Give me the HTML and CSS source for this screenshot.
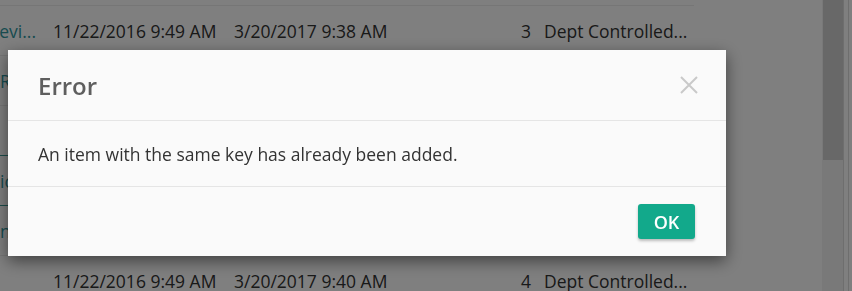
FILE: index.html
```html
<!DOCTYPE html>
<html lang="en">
<head>
    <meta charset="UTF-8">
    <meta name="viewport" content="width=device-width, initial-scale=1.0">
    <title>Documents</title>
    <link rel="stylesheet" href="styles.css">
</head>
<body>
    <div class="page">
        <div class="grid">
            <div class="row">
                <div class="cell name"><a href="#">Revi...</a></div>
                <div class="cell">11/22/2016 9:49 AM</div>
                <div class="cell">3/20/2017 9:38 AM</div>
                <div class="cell count">3</div>
                <div class="cell type">Dept Controlled...</div>
            </div>
            <div class="row">
                <div class="cell name start"><a href="#">Re</a></div>
            </div>
            <div class="row before-selected"></div>
            <div class="row selected">
                <div class="cell name"><a href="#">ic</a></div>
            </div>
            <div class="row">
                <div class="cell name"><a href="#">n</a></div>
            </div>
            <div class="row last">
                <div class="cell name"></div>
                <div class="cell">11/22/2016 9:49 AM</div>
                <div class="cell">3/20/2017 9:40 AM</div>
                <div class="cell count">4</div>
                <div class="cell type">Dept Controlled...</div>
            </div>
        </div>
        <div class="scrollbar">
            <div class="thumb"></div>
        </div>
        <div class="edge"></div>
    </div>

    <!-- Error dialog -->
    <div class="backdrop"></div>
    <div class="dialog">
        <div class="dialog-header">
            <h4 class="dialog-title">Error</h4>
            <button class="close" aria-label="Close">
                <svg width="18" height="18" viewBox="0 0 18 18">
                    <path d="M1 1 L17 17 M17 1 L1 17" stroke="#c9c9c9" stroke-width="2" fill="none"/>
                </svg>
            </button>
        </div>
        <div class="dialog-body">An item with the same key has already been added.</div>
        <div class="dialog-footer">
            <button class="btn-ok">OK</button>
        </div>
    </div>
</body>
</html>
```

FILE: styles.css
```css
html, body {
    margin: 0;
    height: 291px;
    overflow: hidden;
}
body {
    font-family: "Open Sans", "Noto Sans", sans-serif;
    font-size: 17.5px;
    color: #333;
    background: #fff;
}
.page {
    display: flex;
    height: 291px;
}
.grid {
    width: 822px;
    height: 286px;
    padding-top: 5px;
    overflow: hidden;
}
.row {
    width: 694px;
    height: 49px;
    display: grid;
    grid-template-columns: 45px 181px 184px 129px 155px;
    align-items: center;
    border-bottom: 1px solid #ececec;
    white-space: nowrap;
}
.row:first-child {
    border-top: 1px solid #ececec;
}
.before-selected,
.selected {
    border-bottom-color: #3a9a96;
}
.cell {
    padding: 0 8px;
    overflow: hidden;
}
.name {
    display: flex;
    justify-content: flex-end;
    padding: 0 9px 0 0;
}
.name.start {
    justify-content: flex-start;
    padding: 0;
}
.selected .name,
.row:nth-child(5) .name {
    justify-content: flex-start;
    padding: 0;
}
.name a {
    color: #30979f;
    text-decoration: none;
}
.count {
    text-align: right;
}
.type {
    padding-left: 5px;
}
.scrollbar {
    width: 20px;
    background: #f3f3f3;
    padding-left: 1px;
}
.thumb {
    height: 160px;
    background: #d0d0d0;
}
.edge {
    width: 4px;
    border-left: 1px solid #dcdcdc;
    border-right: 1px solid #dcdcdc;
}

.backdrop {
    position: fixed;
    top: 0;
    left: 0;
    right: 0;
    bottom: 0;
    background: rgba(0, 0, 0, 0.5);
}
.dialog {
    position: fixed;
    top: 50px;
    left: 8px;
    width: 718px;
    background: #fafafa;
    box-shadow: 0 5px 15px rgba(0, 0, 0, 0.5);
}
.dialog-header {
    height: 70px;
    display: flex;
    align-items: center;
    justify-content: space-between;
    padding: 0 28px 0 30px;
    border-bottom: 1px solid #e5e5e5;
}
.dialog-title {
    margin: 0;
    font-size: 24px;
    font-weight: 600;
    color: #5e5e5e;
}
.close {
    border: none;
    background: none;
    padding: 0;
    width: 18px;
    height: 18px;
    cursor: pointer;
    display: flex;
}
.dialog-body {
    height: 65px;
    display: flex;
    align-items: center;
    padding: 0 30px;
    border-bottom: 1px solid #e5e5e5;
    color: #333;
}
.dialog-footer {
    height: 69px;
    display: flex;
    align-items: center;
    justify-content: flex-end;
    padding: 0 31px;
}
.btn-ok {
    width: 57px;
    height: 35px;
    border: none;
    border-radius: 3px;
    background: #12a98b;
    color: #fff;
    font-family: "Open Sans", "Noto Sans", sans-serif;
    font-size: 18px;
    font-weight: 600;
    box-shadow: 0 2px 3px rgba(0, 0, 0, 0.25);
    cursor: pointer;
}
```
